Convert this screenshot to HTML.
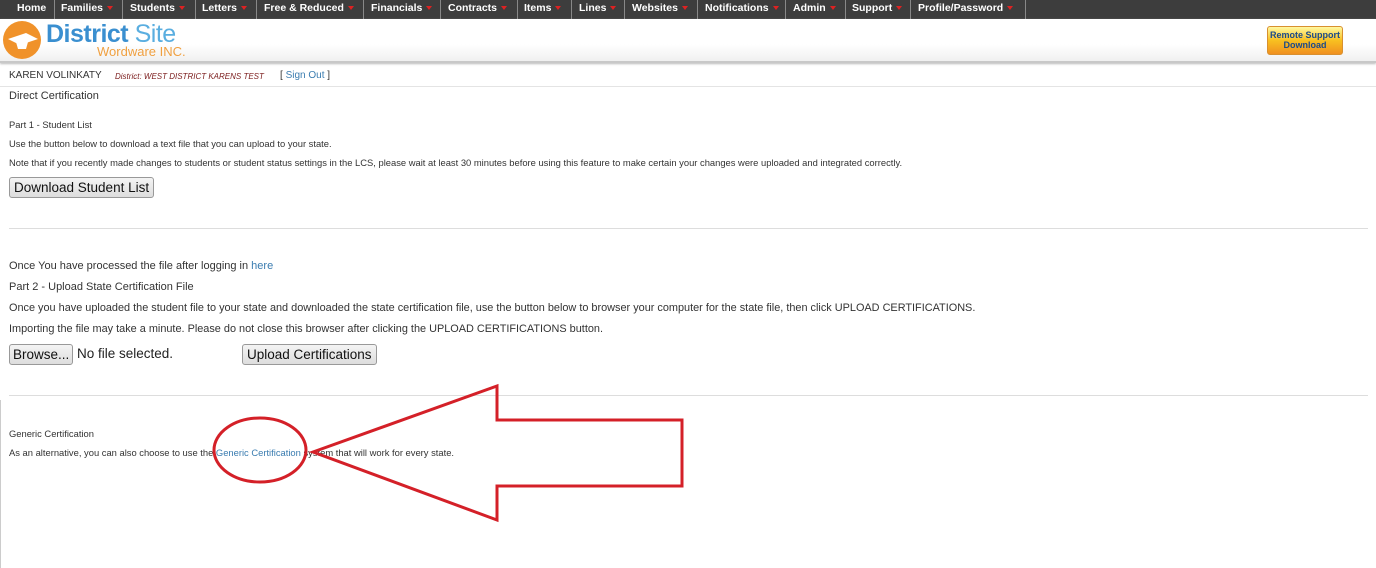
<!DOCTYPE html>
<html><head><meta charset="utf-8"><style>
body{margin:0;width:1376px;height:568px;overflow:hidden;background:#fff;font-family:"Liberation Sans",sans-serif;color:#333;position:relative}
.nav{position:absolute;left:0;top:0;width:1376px;height:19px;background:#3d3d3d}
.nav span{position:absolute;top:0;height:19px;line-height:17px;color:#fff;font-weight:bold;font-size:10.5px;border-right:1px solid #888;box-sizing:border-box}
.nav span i{display:inline-block;width:0;height:0;border-left:3px solid transparent;border-right:3px solid transparent;border-top:4px solid #d22;margin-left:4px;vertical-align:middle}
.hdr{position:absolute;top:19px;left:0;width:1376px;height:42px;background:linear-gradient(#fff 60%,#f0f0f0);border-bottom:2px solid #c8c8c8;box-shadow:0 1px 2px #bbb}
.t{position:absolute;white-space:nowrap}
a{color:#3a7cb0;text-decoration:none}
.btn{position:absolute;border:1px solid #999;border-radius:3px;background:linear-gradient(#f4f4f4,#ddd);font-size:13.5px;color:#111;padding:0 4px;height:19px;line-height:19px}
.hr{position:absolute;left:9px;width:1359px;height:1px;background:#ddd}
.s{font-size:9.4px}
</style></head><body>
<div class="nav">
<span style="left:0;width:55px;padding-left:17px">Home</span>
<span style="left:55px;width:68px;padding-left:6px">Families<i></i></span>
<span style="left:123px;width:73px;padding-left:7px">Students<i></i></span>
<span style="left:196px;width:61px;padding-left:6px">Letters<i></i></span>
<span style="left:257px;width:107px;padding-left:7px">Free &amp; Reduced<i></i></span>
<span style="left:364px;width:77px;padding-left:7px">Financials<i></i></span>
<span style="left:441px;width:77px;padding-left:7px">Contracts<i></i></span>
<span style="left:518px;width:54px;padding-left:6px">Items<i></i></span>
<span style="left:572px;width:53px;padding-left:7px">Lines<i></i></span>
<span style="left:625px;width:73px;padding-left:7px">Websites<i></i></span>
<span style="left:698px;width:88px;padding-left:7px">Notifications<i></i></span>
<span style="left:786px;width:60px;padding-left:7px">Admin<i></i></span>
<span style="left:846px;width:65px;padding-left:6px">Support<i></i></span>
<span style="left:911px;width:115px;padding-left:7px">Profile/Password<i></i></span>
</div>
<div class="hdr">
<div class="t" style="left:3px;top:2px;width:38px;height:38px;border-radius:50%;background:#f0922a"></div>
<svg class="t" style="left:6px;top:12px" width="34" height="20"><polygon points="2,8 20,2 32,8 14,14" fill="#fff"/><polygon points="10,11 22,11 20,18 12,18" fill="#fff"/></svg>
<div class="t" style="left:46px;top:1px;font-size:25px;color:#3a8fd0;font-weight:bold;letter-spacing:-0.5px">District <span style="font-weight:normal;color:#5aaee0">Site</span></div>
<div class="t" style="left:97px;top:25px;font-size:13px;color:#f0a040">Wordware INC.</div>
<div class="t" style="left:1267px;top:7px;width:76px;height:29px;border:1px solid #d89030;border-radius:3px;background:linear-gradient(#fff8a0,#f8c020 50%,#f09020);font-size:9px;font-weight:bold;color:#1a4a8a;text-align:center;line-height:10px;padding-top:3px;box-sizing:border-box">Remote Support<br>Download</div>
</div>
<div class="t" style="left:9px;top:70px;font-size:10px">KAREN VOLINKATY</div>
<div class="t" style="left:115px;top:72px;font-size:8px;font-style:italic;color:#7a1a1a">District: WEST DISTRICT KARENS TEST</div>
<div class="t" style="left:280px;top:70px;font-size:10px">[ <a>Sign Out</a> ]</div>
<div class="hr" style="left:0;width:1376px;top:86px;background:#e4e4e4"></div>
<div class="t" style="left:9px;top:90px;font-size:11px">Direct Certification</div>
<div class="t s" style="left:9px;top:119px">Part 1 - Student List</div>
<div class="t s" style="left:9px;top:138px">Use the button below to download a text file that you can upload to your state.</div>
<div class="t s" style="left:9px;top:157px">Note that if you recently made changes to students or student status settings in the LCS, please wait at least 30 minutes before using this feature to make certain your changes were uploaded and integrated correctly.</div>
<div class="btn" style="left:9px;top:177px">Download Student List</div>
<div class="hr" style="top:228px"></div>
<div class="t" style="left:9px;top:260px;font-size:11px">Once You have processed the file after logging in <a>here</a></div>
<div class="t" style="left:9px;top:281px;font-size:11px">Part 2 - Upload State Certification File</div>
<div class="t" style="left:9px;top:302px;font-size:10.9px">Once you have uploaded the student file to your state and downloaded the state certification file, use the button below to browser your computer for the state file, then click UPLOAD CERTIFICATIONS.</div>
<div class="t" style="left:9px;top:323px;font-size:10.9px">Importing the file may take a minute. Please do not close this browser after clicking the UPLOAD CERTIFICATIONS button.</div>
<div class="btn" style="left:9px;top:344px;padding:0 3px">Browse...</div>
<div class="t" style="left:77px;top:346px;font-size:13.5px;color:#222">No file selected.</div>
<div class="btn" style="left:242px;top:344px">Upload Certifications</div>
<div class="hr" style="top:395px"></div>
<div class="t" style="left:0;top:400px;width:1px;height:168px;background:#ccc"></div>
<div class="t s" style="left:9px;top:428px">Generic Certification</div>
<div class="t s" style="left:9px;top:447px">As an alternative, you can also choose to use the <a>Generic Certification</a> system that will work for every state.</div>
<svg class="t" style="left:0;top:0" width="1376" height="568"><ellipse cx="260" cy="450" rx="46" ry="32" fill="none" stroke="#d42028" stroke-width="3"/><polygon points="313,452 497,386 497,420 682,420 682,486 497,486 497,520" fill="none" stroke="#d42028" stroke-width="3" stroke-linejoin="miter"/></svg>
</body></html>
